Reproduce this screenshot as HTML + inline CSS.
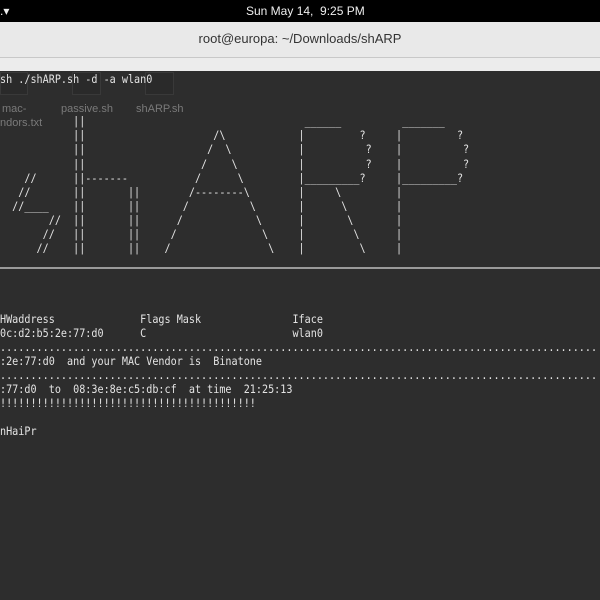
<!DOCTYPE html>
<html><head><meta charset="utf-8"><style>
html,body{margin:0;padding:0;width:600px;height:600px;overflow:hidden;background:#2d2d2d}
#top{position:absolute;left:0;top:0;width:600px;height:22px;background:#000;color:#eee;font:12px "Liberation Sans",sans-serif}
#title{position:absolute;left:0;top:22px;width:600px;height:35px;background:#e9e9e9;border-bottom:1px solid #c8c8c8;color:#333;font:13px "Liberation Sans",sans-serif;text-align:center;line-height:34px}
#tb{position:absolute;left:0;top:58px;width:600px;height:13px;background:#ececec;border-bottom:1px solid #bbb}
#term{position:absolute;left:0;top:71px;width:600px;height:529px;background:#2d2d2d;overflow:hidden}
pre{position:absolute;left:0;top:1px;margin:0;font:11.5px "DejaVu Sans Mono","Liberation Mono",monospace;line-height:14.1px;color:#e4e4e4;white-space:pre;transform:scaleX(0.88);transform-origin:0 0}
.ic{position:absolute;border:1px solid #3c3c3c;background:#2a2a2a;opacity:.8}
.lbl{position:absolute;color:#7a7a7a;font:11px "Liberation Sans",sans-serif}
#sep{position:absolute;left:0;top:196px;width:600px;height:2px;background:#9a9a9a}
</style></head><body>
<div id="top"><span style="position:absolute;left:0;top:4px">.&#9662;</span><span style="position:absolute;left:246px;top:4px">Sun May 14,&nbsp; 9:25 PM</span></div>
<div id="title">root@europa: ~/Downloads/shARP</div>
<div id="tb"></div>
<div id="term">
<div class="ic" style="left:0;top:1px;width:26px;height:21px"></div>
<div class="ic" style="left:72px;top:1px;width:27px;height:21px"></div>
<div class="ic" style="left:145px;top:1px;width:27px;height:21px"></div>
<div class="lbl" style="left:2px;top:32px">mac-</div>
<div class="lbl" style="left:0;top:46px">ndors.txt</div>
<div class="lbl" style="left:61px;top:32px">passive.sh</div>
<div class="lbl" style="left:136px;top:32px">shARP.sh</div>
<div id="sep"></div>
<pre>sh ./shARP.sh -d -a wlan0


            ||                                    ______          _______
            ||                     /\            |         ?     |         ?
            ||                    /  \           |          ?    |          ?
            ||                   /    \          |          ?    |          ?
    //      ||-------           /      \         |_________?     |_________?
   //       ||       ||        /--------\        |     \         |
  //____    ||       ||       /          \       |      \        |
        //  ||       ||      /            \      |       \       |
       //   ||       ||     /              \     |        \      |
      //    ||       ||    /                \    |         \     |




HWaddress              Flags Mask               Iface
0c:d2:b5:2e:77:d0      C                        wlan0
..................................................................................................
:2e:77:d0  and your MAC Vendor is  Binatone
..................................................................................................
:77:d0  to  08:3e:8e:c5:db:cf  at time  21:25:13
!!!!!!!!!!!!!!!!!!!!!!!!!!!!!!!!!!!!!!!!!!

nHaiPr</pre>
</div>
</body></html>
